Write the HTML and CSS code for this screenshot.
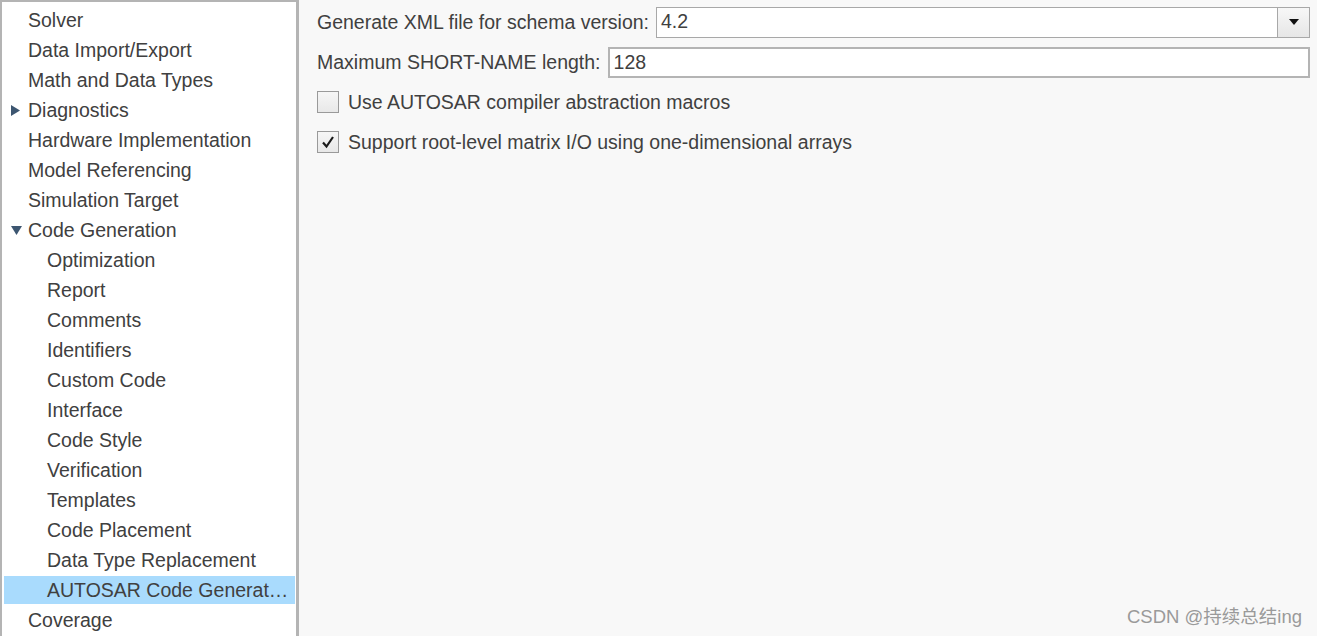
FILE: index.html
```html
<!DOCTYPE html>
<html>
<head>
  <title>Configuration Parameters</title>
  <link rel="stylesheet" href="styles.css">
</head>
<body>
  <div class="layout">

    <!-- Left tree of categories -->
    <div class="tree">
      <div class="node"><span class="toggle"></span>Solver</div>
      <div class="node"><span class="toggle"></span>Data Import/Export</div>
      <div class="node"><span class="toggle"></span>Math and Data Types</div>
      <div class="node"><span class="toggle"><svg width="9" height="11" viewBox="0 0 9 11"><path d="M0 0 L9 5.5 L0 11 Z" fill="#3d5671"/></svg></span>Diagnostics</div>
      <div class="node"><span class="toggle"></span>Hardware Implementation</div>
      <div class="node"><span class="toggle"></span>Model Referencing</div>
      <div class="node"><span class="toggle"></span>Simulation Target</div>
      <div class="node"><span class="toggle"><svg width="11" height="9" viewBox="0 0 11 9"><path d="M0 0 L11 0 L5.5 9 Z" fill="#3d5671"/></svg></span>Code Generation</div>
      <div class="node child">Optimization</div>
      <div class="node child">Report</div>
      <div class="node child">Comments</div>
      <div class="node child">Identifiers</div>
      <div class="node child">Custom Code</div>
      <div class="node child">Interface</div>
      <div class="node child">Code Style</div>
      <div class="node child">Verification</div>
      <div class="node child">Templates</div>
      <div class="node child">Code Placement</div>
      <div class="node child">Data Type Replacement</div>
      <div class="node child selected">AUTOSAR Code Generat…</div>
      <div class="node"><span class="toggle"></span>Coverage</div>
    </div>

    <!-- Settings for the selected category -->
    <div class="settings">
      <div class="row">
        <span class="label">Generate XML file for schema version:</span>
        <div class="dropdown">
          <span class="value">4.2</span>
          <span class="drop-btn"><svg width="10" height="6" viewBox="0 0 10 6"><path d="M0 0 L10 0 L5 6 Z" fill="#111"/></svg></span>
        </div>
      </div>
      <div class="row">
        <span class="label">Maximum SHORT-NAME length:</span>
        <div class="textfield">128</div>
      </div>
      <div class="row">
        <span class="checkbox"></span>
        <span class="label">Use AUTOSAR compiler abstraction macros</span>
      </div>
      <div class="row">
        <span class="checkbox"><svg width="16" height="16" viewBox="0 0 16 16"><path d="M3 8.5 L6.5 12.5 L13 3" fill="none" stroke="#1a1a1a" stroke-width="2.2"/></svg></span>
        <span class="label">Support root-level matrix I/O using one-dimensional arrays</span>
      </div>
    </div>
  </div>

  <div class="watermark">CSDN @持续总结ing</div>
</body>
</html>
```

FILE: styles.css
```css
* {
    box-sizing: border-box;
    margin: 0;
    padding: 0;
}

body {
    font-family: "Liberation Sans", Arial, sans-serif;
    font-size: 19.5px;
    color: #404040;
    background-color: #f8f8f8;
    height: 636px;
    overflow: hidden;
}

.layout {
    display: flex;
    height: 100%;
}

/* left category tree */
.tree {
    width: 299px;
    flex-shrink: 0;
    background-color: white;
    border-top: 2px solid #b4b4b4;
    border-left: 2px solid #b4b4b4;
    border-right: 3px solid #b4b4b4;
    padding-top: 3px;
}

.node {
    display: flex;
    align-items: center;
    height: 30px;
    margin: 0 1px 0 2px;
    padding-left: 5px;
    white-space: nowrap;
}

.toggle {
    width: 19px;
    display: flex;
    align-items: center;
    padding-left: 2px;
}

.child {
    padding-left: 43px;
}

.selected {
    background-color: #a9dbfd;
    box-shadow: inset 0 1px 0 white, inset 0 -1px 0 white;
}

/* right settings pane */
.settings {
    flex: 1;
    padding: 2px 7px 0 18px;
}

.row {
    display: flex;
    align-items: center;
    height: 40px;
}

.label {
    white-space: nowrap;
    margin-right: 7px;
}

.dropdown {
    flex: 1;
    display: flex;
    height: 31px;
    background-color: white;
    border: 1px solid #a8a8a8;
}

.dropdown .value {
    flex: 1;
    padding-left: 4px;
    line-height: 27px;
}

.drop-btn {
    width: 32px;
    display: flex;
    align-items: center;
    justify-content: center;
    border-left: 1px solid #a8a8a8;
    background: linear-gradient(#f7f7f7, #e6e6e6);
}

.textfield {
    flex: 1;
    height: 31px;
    background-color: white;
    border: 2px solid #b4b4b4;
    padding-left: 4px;
    line-height: 26px;
}

.checkbox {
    width: 22px;
    height: 22px;
    border: 1px solid #9a9a9a;
    background: linear-gradient(#f6f6f6, #e8e8e8);
    margin-right: 9px;
    display: flex;
    align-items: center;
    justify-content: center;
}

.row .checkbox + .label {
    margin-right: 0;
}

.watermark {
    position: absolute;
    right: 15px;
    bottom: 8px;
    font-size: 18.5px;
    color: #9a9a9a;
    font-family: "Liberation Sans", "Noto Sans CJK SC", sans-serif;
}
```
